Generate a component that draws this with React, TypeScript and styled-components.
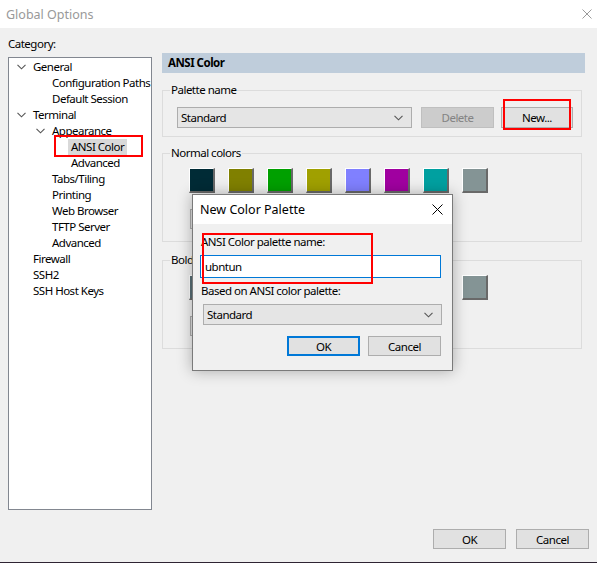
import React from 'react'
import styled, { createGlobalStyle, css } from 'styled-components'

const GlobalStyle = createGlobalStyle`
  html, body {
    margin: 0;
    padding: 0;
    background: #f0f0f0;
  }
  body {
    font-family: 'Noto Sans', 'Liberation Sans', sans-serif;
    font-size: 11.5px;
    letter-spacing: -0.5px;
    color: #000;
  }
  * {
    box-sizing: border-box;
  }
`

const Window = styled.div`
  position: relative;
  width: 597px;
  height: 563px;
  display: flex;
  flex-direction: column;
  background: #f0f0f0;
  border-bottom: 1px solid #2e2433;
  overflow: hidden;
`

const TitleBar = styled.div`
  height: 28px;
  flex-shrink: 0;
  display: flex;
  align-items: center;
  justify-content: space-between;
  padding: 0 5px 0 6px;
  background: #fff;
  color: #999;
  font-size: 12.5px;
  letter-spacing: 0;
`

const Body = styled.div`
  display: grid;
  grid-template-columns: 144px 423px;
  column-gap: 10px;
  align-items: start;
  padding: 8px 0 0 8px;
`

const LeftCol = styled.div`
  display: flex;
  flex-direction: column;
`

const CategoryLabel = styled.div`
  line-height: 16px;
  margin-bottom: 5px;
`

const Tree = styled.ul`
  list-style: none;
  margin: 0;
  width: 144px;
  height: 453px;
  padding: 1px 0 0;
  border: 1px solid #828790;
  background: #fff;
`

const TreeRow = styled.li<{ $level: number }>`
  display: flex;
  align-items: center;
  height: 16px;
  padding-left: ${(p) => 8 + p.$level * 19}px;
  white-space: nowrap;
`

const Twisty = styled.span`
  width: 16px;
  height: 16px;
  flex-shrink: 0;
  display: flex;
  align-items: center;
`

const TreeLabel = styled.span<{ $selected?: boolean }>`
  line-height: 16px;
  padding: 0 3px;
  margin-left: -3px;
  ${(p) =>
    p.$selected &&
    css`
      background: #d9d9d9;
    `}
`

const RightCol = styled.div`
  padding-top: 17px;
`

const Header = styled.div`
  height: 20px;
  line-height: 20px;
  padding-left: 6px;
  background: #bfcddb;
  font-weight: bold;
`

const Group = styled.fieldset<{ $top: number }>`
  margin: ${(p) => p.$top}px 3px 0 0;
  padding: 0;
  min-width: 0;
  border: 1px solid #dcdcdc;
`

const Legend = styled.legend`
  margin-left: 7px;
  padding: 0 1px;
  line-height: 16px;
`

const PaletteRow = styled.div`
  display: flex;
  align-items: center;
  padding: 9px 8px 8px 14px;
`

const ColorsBody = styled.div<{ $bottom: number }>`
  display: flex;
  flex-direction: column;
  align-items: flex-start;
  padding: 7px 0 ${(p) => p.$bottom}px 26px;
`

const Swatches = styled.div`
  display: flex;
  gap: 13px;
`

const Swatch = styled.div<{ $color: string }>`
  width: 26px;
  height: 25px;
  background: ${(p) => p.$color};
  border-style: solid;
  border-width: 1px 2px 2px 1px;
  border-color: #fff #696969 #696969 #fff;
`

const ComboBox = styled.div<{ $width: number }>`
  width: ${(p) => p.$width}px;
  height: 21px;
  display: flex;
  align-items: center;
  justify-content: space-between;
  padding: 0 8px 0 3px;
  background: #e5e5e5;
  border: 1px solid #adadad;
`

const Button = styled.div<{ $width: number; $variant?: 'disabled' | 'primary'; $gap?: number }>`
  width: ${(p) => p.$width}px;
  height: 20px;
  margin-left: ${(p) => p.$gap ?? 0}px;
  display: flex;
  align-items: center;
  justify-content: center;
  background: #e1e1e1;
  border: 1px solid #adadad;
  ${(p) =>
    p.$variant === 'disabled' &&
    css`
      background: #cccccc;
      border-color: #bfbfbf;
      color: #838383;
    `}
  ${(p) =>
    p.$variant === 'primary' &&
    css`
      border: 2px solid #0078d7;
    `}
`

const TallButton = styled(Button)`
  height: 21px;
`

const RowButton = styled(Button)`
  margin: 16px 0 0 1px;
`

const Footer = styled.div`
  display: flex;
  justify-content: flex-end;
  gap: 10px;
  padding: 19px 8px 0 0;
`

const Dialog = styled.div`
  position: absolute;
  left: 192px;
  top: 194px;
  width: 261px;
  height: 177px;
  display: flex;
  flex-direction: column;
  background: #f0f0f0;
  border: 1px solid #7a7a7a;
  box-shadow: 0 0 14px rgba(0, 0, 0, 0.3);
`

const DialogTitle = styled.div`
  height: 29px;
  flex-shrink: 0;
  display: flex;
  align-items: center;
  justify-content: space-between;
  padding: 0 9px 0 7px;
  background: #fff;
  font-size: 12.5px;
  letter-spacing: 0;
`

const DialogBody = styled.div`
  display: flex;
  flex-direction: column;
  align-items: flex-start;
  padding: 10px 11px 0 8px;
`

const FieldLabel = styled.div<{ $top?: number }>`
  line-height: 16px;
  margin-top: ${(p) => p.$top ?? 0}px;
`

const TextInput = styled.div`
  width: 241px;
  height: 23px;
  margin: 5px 0 0 -1px;
  display: flex;
  align-items: center;
  padding-left: 4px;
  background: #fff;
  border: 1px solid #0078d7;
`

const DialogCombo = styled(ComboBox)`
  margin: 5px 0 0 2px;
`

const DialogButtons = styled.div`
  align-self: stretch;
  display: flex;
  justify-content: flex-end;
  gap: 8px;
  margin-top: 11px;
`

const Mark = styled.div<{ $x: number; $y: number; $w: number; $h: number }>`
  position: absolute;
  left: ${(p) => p.$x}px;
  top: ${(p) => p.$y}px;
  width: ${(p) => p.$w}px;
  height: ${(p) => p.$h}px;
  border: 2px solid #ff0000;
  pointer-events: none;
`

const Chevron = ({ color = '#555' }: { color?: string }) => (
  <svg width="9" height="6" viewBox="0 0 9 6">
    <polyline points="0.5,0.8 4.5,4.8 8.5,0.8" fill="none" stroke={color} strokeWidth="1.1" />
  </svg>
)

const CloseIcon = ({ size, color }: { size: number; color: string }) => (
  <svg width={size} height={size} viewBox={`0 0 ${size} ${size}`}>
    <path d={`M0.5 0.5 L${size - 0.5} ${size - 0.5} M${size - 0.5} 0.5 L0.5 ${size - 0.5}`} stroke={color} strokeWidth="1" />
  </svg>
)

type Node = { label: string; level: number; open?: boolean; selected?: boolean }

const tree: Node[] = [
  { label: 'General', level: 0, open: true },
  { label: 'Configuration Paths', level: 1 },
  { label: 'Default Session', level: 1 },
  { label: 'Terminal', level: 0, open: true },
  { label: 'Appearance', level: 1, open: true },
  { label: 'ANSI Color', level: 2, selected: true },
  { label: 'Advanced', level: 2 },
  { label: 'Tabs/Tiling', level: 1 },
  { label: 'Printing', level: 1 },
  { label: 'Web Browser', level: 1 },
  { label: 'TFTP Server', level: 1 },
  { label: 'Advanced', level: 1 },
  { label: 'Firewall', level: 0 },
  { label: 'SSH2', level: 0 },
  { label: 'SSH Host Keys', level: 0 },
]

const normalColors = ['#002b36', '#808000', '#00a000', '#a0a000', '#8080ff', '#a000a0', '#00a0a0', '#849495']
const boldColors = ['#586e75', '#ff5555', '#55ff55', '#ffff55', '#5555ff', '#ff55ff', '#55ffff', '#849495']

export default function App() {
  return (
    <>
      <GlobalStyle />
      <Window>
        <TitleBar>
          <span>Global Options</span>
          <CloseIcon size={10} color="#9a9a9a" />
        </TitleBar>

        <Body>
          <LeftCol>
            <CategoryLabel>Category:</CategoryLabel>
            <Tree>
              {tree.map((n, i) => (
                <TreeRow key={i} $level={n.level}>
                  <Twisty>{n.open && <Chevron />}</Twisty>
                  <TreeLabel $selected={n.selected}>{n.label}</TreeLabel>
                </TreeRow>
              ))}
            </Tree>
          </LeftCol>

          <RightCol>
            <Header>ANSI Color</Header>

            <Group $top={9}>
              <Legend>Palette name</Legend>
              <PaletteRow>
                <ComboBox $width={235}>
                  <span>Standard</span>
                  <Chevron />
                </ComboBox>
                <TallButton $width={73} $variant="disabled" $gap={9}>
                  Delete
                </TallButton>
                <TallButton $width={72} $gap={7}>
                  New...
                </TallButton>
              </PaletteRow>
            </Group>

            <Group $top={8}>
              <Legend>Normal colors</Legend>
              <ColorsBody $bottom={12}>
                <Swatches>
                  {normalColors.map((c, i) => (
                    <Swatch key={i} $color={c} />
                  ))}
                </Swatches>
                <RowButton $width={90} />
              </ColorsBody>
            </Group>

            <Group $top={10}>
              <Legend>Bold colors</Legend>
              <ColorsBody $bottom={12}>
                <Swatches>
                  {boldColors.map((c, i) => (
                    <Swatch key={i} $color={c} />
                  ))}
                </Swatches>
                <RowButton $width={90} />
              </ColorsBody>
            </Group>
          </RightCol>
        </Body>

        <Footer>
          <Button $width={73}>OK</Button>
          <Button $width={73}>Cancel</Button>
        </Footer>

        <Dialog>
          <DialogTitle>
            <span>New Color Palette</span>
            <CloseIcon size={11} color="#000" />
          </DialogTitle>
          <DialogBody>
            <FieldLabel>ANSI Color palette name:</FieldLabel>
            <TextInput>ubntun</TextInput>
            <FieldLabel $top={5}>Based on ANSI color palette:</FieldLabel>
            <DialogCombo $width={239}>
              <span>Standard</span>
              <Chevron />
            </DialogCombo>
            <DialogButtons>
              <Button $width={73} $variant="primary">
                OK
              </Button>
              <Button $width={73}>Cancel</Button>
            </DialogButtons>
          </DialogBody>
        </Dialog>

        <Mark $x={54} $y={135} $w={89} $h={22} />
        <Mark $x={503} $y={99} $w={68} $h={31} />
        <Mark $x={202} $y={233} $w={171} $h={51} />
      </Window>
    </>
  )
}
